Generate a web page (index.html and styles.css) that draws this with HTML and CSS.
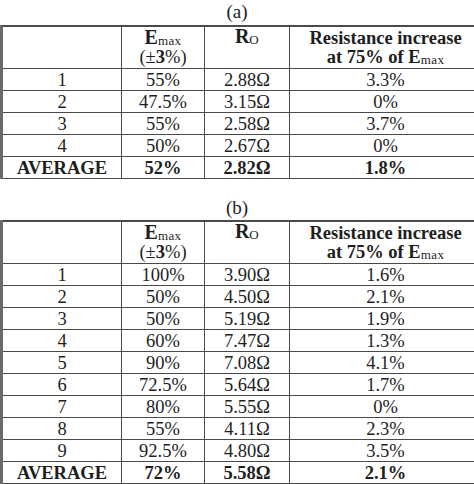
FILE: index.html
```html
<!DOCTYPE html>
<html>
<head>
<meta charset="utf-8">
<link rel="stylesheet" href="styles.css">
</head>
<body>
<div class="page">
  <div class="caption">(a)</div>
  <table class="data">
    <colgroup><col class="c1"><col class="c2"><col class="c3"><col class="c4"></colgroup>
    <tr class="head">
      <td></td>
      <td><b class="big">E</b><span class="sub">max</span><br>(±<b>3</b>%)</td>
      <td class="top"><b class="big">R</b><span class="sub">O</span></td>
      <td><b>Resistance increase<br>at 75% of E</b><span class="sub">max</span></td>
    </tr>
    <tr><td>1</td><td>55%</td><td>2.88Ω</td><td>3.3%</td></tr>
    <tr><td>2</td><td>47.5%</td><td>3.15Ω</td><td>0%</td></tr>
    <tr><td>3</td><td>55%</td><td>2.58Ω</td><td>3.7%</td></tr>
    <tr><td>4</td><td>50%</td><td>2.67Ω</td><td>0%</td></tr>
    <tr class="avg"><td>AVERAGE</td><td>52%</td><td>2.82Ω</td><td>1.8%</td></tr>
  </table>
  <div class="caption second">(b)</div>
  <table class="data">
    <colgroup><col class="c1"><col class="c2"><col class="c3"><col class="c4"></colgroup>
    <tr class="head">
      <td></td>
      <td><b class="big">E</b><span class="sub">max</span><br>(±<b>3</b>%)</td>
      <td class="top"><b class="big">R</b><span class="sub">O</span></td>
      <td><b>Resistance increase<br>at 75% of E</b><span class="sub">max</span></td>
    </tr>
    <tr><td>1</td><td>100%</td><td>3.90Ω</td><td>1.6%</td></tr>
    <tr><td>2</td><td>50%</td><td>4.50Ω</td><td>2.1%</td></tr>
    <tr><td>3</td><td>50%</td><td>5.19Ω</td><td>1.9%</td></tr>
    <tr><td>4</td><td>60%</td><td>7.47Ω</td><td>1.3%</td></tr>
    <tr><td>5</td><td>90%</td><td>7.08Ω</td><td>4.1%</td></tr>
    <tr><td>6</td><td>72.5%</td><td>5.64Ω</td><td>1.7%</td></tr>
    <tr><td>7</td><td>80%</td><td>5.55Ω</td><td>0%</td></tr>
    <tr><td>8</td><td>55%</td><td>4.11Ω</td><td>2.3%</td></tr>
    <tr><td>9</td><td>92.5%</td><td>4.80Ω</td><td>3.5%</td></tr>
    <tr class="avg"><td>AVERAGE</td><td>72%</td><td>5.58Ω</td><td>2.1%</td></tr>
  </table>
</div>
</body>
</html>
```

FILE: styles.css
```css
html, body {
  margin: 0;
  padding: 0;
  background: #fff;
  overflow: hidden;
}
.page {
  width: 474px;
  height: 484px;
  overflow: hidden;
  font-family: "Liberation Serif", "Times New Roman", serif;
  font-size: 18.5px;
  color: #1e1e1e;
}
.caption {
  height: 25px;
  line-height: 24px;
  text-align: center;
  font-size: 19px;
}
.caption.second {
  margin-top: 17px;
  height: 24px;
}
.data {
  border-collapse: collapse;
  table-layout: fixed;
  width: 480px;
}
.c1 { width: 120px; }
.c2 { width: 83px; }
.c3 { width: 85px; }
.c4 { width: 192px; }
.data td {
  border: 1px solid #4a4a4a;
  text-align: center;
  vertical-align: middle;
  padding: 0;
  height: 21px;
  line-height: 20px;
  white-space: nowrap;
}
.data td:first-child {
  border-left: 3px solid #6a6a6a;
}
.data tr:first-child td {
  border-top: 2px solid #4a4a4a;
}
.data .head td {
  height: 41px;
  line-height: 19px;
}
.data .head td.top {
  vertical-align: top;
  padding-top: 1px;
  height: 40px;
}
.big {
  font-size: 20px;
  line-height: 0;
}
.sub {
  font-size: 13px;
  line-height: 0;
  vertical-align: -1px;
  font-weight: normal;
  letter-spacing: 0.4px;
}
.avg td {
  font-weight: bold;
}
```
